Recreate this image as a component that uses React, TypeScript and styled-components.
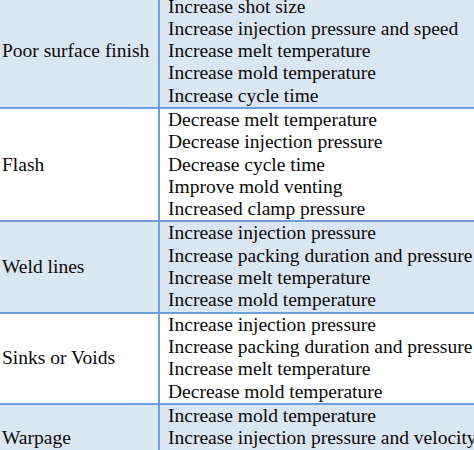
import React from "react";
import styled, { createGlobalStyle } from "styled-components";

const Global = createGlobalStyle`
  html, body { margin: 0; padding: 0; background: #ffffff; overflow: hidden; }
  body { width: 474px; height: 450px; }
`;

const Table = styled.div`
  margin-top: -4.5px;
  width: 540px;
  display: flex;
  flex-direction: column;
  font-family: "Liberation Serif", "Times New Roman", serif;
  font-size: 19.5px;
  color: #0a0a0a;
`;

const Row = styled.div<{ $shade: boolean }>`
  display: grid;
  grid-template-columns: 160px 1fr;
  background: ${(p) => (p.$shade ? "#dbe6f3" : "#ffffff")};
  border-bottom: 2px solid #6b9fd6;
`;

const Label = styled.div`
  display: flex;
  align-items: center;
  padding-left: 2px;
  border-right: 2px solid #6b9fd6;
  line-height: 22.3px;
  white-space: nowrap;
`;

const Remedies = styled.div`
  display: flex;
  flex-direction: column;
  padding-left: 8px;
`;

const Remedy = styled.div`
  line-height: 22.3px;
  white-space: nowrap;
`;

const rows: { defect: string; remedies: string[] }[] = [
  {
    defect: "Poor surface finish",
    remedies: [
      "Increase shot size",
      "Increase injection pressure and speed",
      "Increase melt temperature",
      "Increase mold temperature",
      "Increase cycle time",
    ],
  },
  {
    defect: "Flash",
    remedies: [
      "Decrease melt temperature",
      "Decrease injection pressure",
      "Decrease cycle time",
      "Improve mold venting",
      "Increased clamp pressure",
    ],
  },
  {
    defect: "Weld lines",
    remedies: [
      "Increase injection pressure",
      "Increase packing duration and pressure",
      "Increase melt temperature",
      "Increase mold temperature",
    ],
  },
  {
    defect: "Sinks or Voids",
    remedies: [
      "Increase injection pressure",
      "Increase packing duration and pressure",
      "Increase melt temperature",
      "Decrease mold temperature",
    ],
  },
  {
    defect: "Warpage",
    remedies: [
      "Increase mold temperature",
      "Increase injection pressure and velocity",
      "Increase cooling time",
    ],
  },
];

export default function App() {
  return (
    <>
      <Global />
      <Table>
        {rows.map((r, i) => (
          <Row key={r.defect} $shade={i % 2 === 0}>
            <Label>{r.defect}</Label>
            <Remedies>
              {r.remedies.map((m) => (
                <Remedy key={m}>{m}</Remedy>
              ))}
            </Remedies>
          </Row>
        ))}
      </Table>
    </>
  );
}
